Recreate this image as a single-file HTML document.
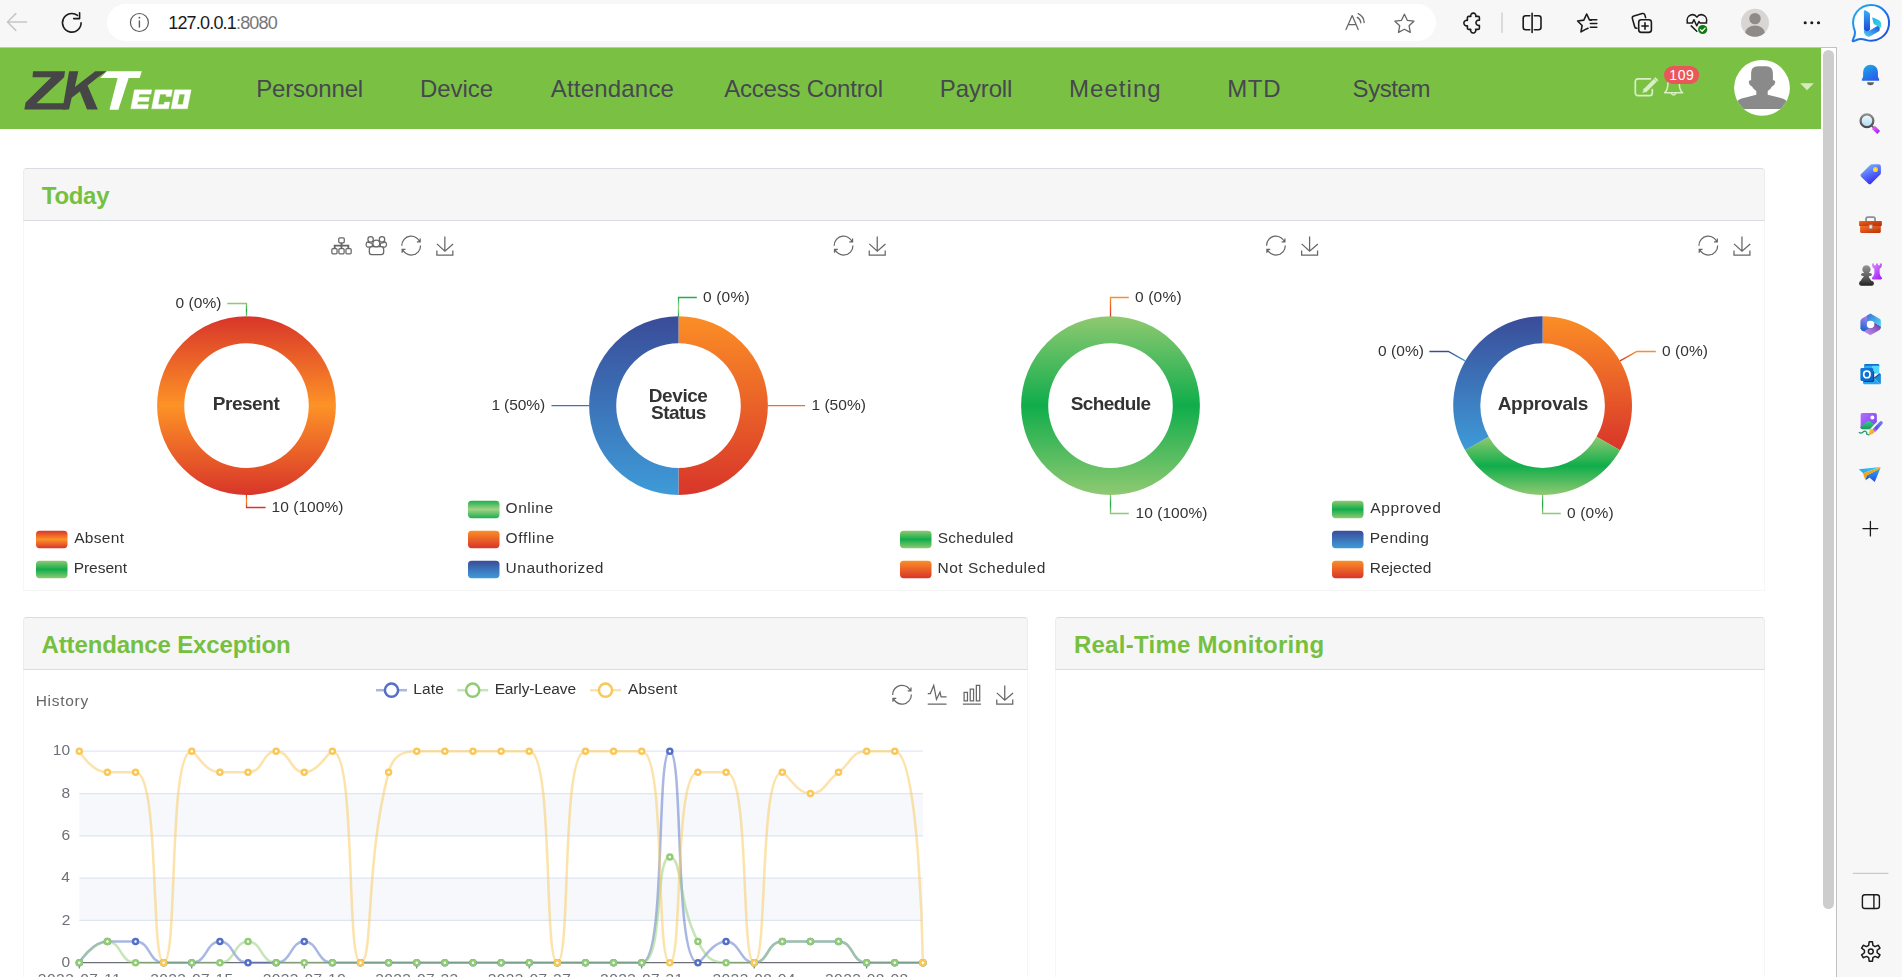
<!DOCTYPE html>
<html lang="en">
<head>
<meta charset="utf-8">
<title>ZKTeco Dashboard</title>
<style>
html,body{margin:0;padding:0;}
body{width:1902px;height:977px;overflow:hidden;background:#f7f7f7;font-family:"Liberation Sans",sans-serif;}
#root{position:relative;width:1902px;height:977px;overflow:hidden;}
.abs{position:absolute;}
.t{position:absolute;white-space:nowrap;line-height:1;}
#toolbar{position:absolute;left:0;top:0;width:1902px;height:47px;background:#f7f7f7;}
#tbline{position:absolute;left:0;top:47px;width:1837px;height:1px;background:#c2c2c2;}
#addr{position:absolute;left:107px;top:4px;width:1329px;height:37px;border-radius:18.5px;background:#fff;}
#viewport{position:absolute;left:0;top:48px;width:1836px;height:929px;background:#fff;overflow:hidden;}
#vpborder{position:absolute;left:1836px;top:47px;width:1px;height:930px;background:#c2c2c2;}
#sidebar{position:absolute;left:1837px;top:48px;width:65px;height:929px;background:#f7f7f7;}
#nav{position:absolute;left:0;top:48px;width:1821px;height:81px;background:#7ac143;}
#sbthumb{position:absolute;left:1823px;top:50px;width:11px;height:859px;border-radius:5.5px;background:#cdcdcd;}
.ph{position:absolute;background:#f6f6f6;border:1px solid #ececee;border-top-color:#d9dde3;border-bottom-color:#d9dde3;border-radius:4px 4px 0 0;box-sizing:border-box;}
.pb{position:absolute;border:1px solid #f6f6f6;border-top:none;box-sizing:border-box;}
.lg{position:absolute;width:31.5px;height:17.5px;border-radius:3.5px;}
.lcd{position:absolute;left:0;top:0;}
#txt{position:absolute;left:0;top:0;width:1902px;height:977px;will-change:transform;}
svg{position:absolute;left:0;top:0;overflow:visible;}
</style>
</head>
<body>
<div id="root">
<!-- browser toolbar -->
<div id="toolbar"></div>
<div id="tbline"></div>
<div id="addr"></div>
<svg width="1902" height="48" viewBox="0 0 1902 48" fill="none" stroke-linecap="round" stroke-linejoin="round">
 <!-- back -->
 <path d="M26.5 22H8M15.8 13.6L7.4 22l8.4 8.4" stroke="#c6c6c6" stroke-width="1.5"/>
 <!-- refresh -->
 <path d="M81.1 22.8a9.3 9.3 0 1 1-3.6-7.35" stroke="#1b1b1b" stroke-width="1.6"/>
 <path d="M79.6 12.7v5.9h-5.9" stroke="#1b1b1b" stroke-width="1.6"/>
 <!-- info -->
 <circle cx="139.4" cy="22.5" r="9" stroke="#5c5c5c" stroke-width="1.2"/>
 <path d="M139.4 21v6" stroke="#5c5c5c" stroke-width="1.4"/>
 <circle cx="139.4" cy="17.7" r="0.9" fill="#5c5c5c" stroke="none"/>
</svg>
<svg width="1902" height="48" viewBox="0 0 1902 48" fill="none" stroke-linecap="round" stroke-linejoin="round">
 <defs>
  <linearGradient id="bingA" x1="0" y1="0" x2="0" y2="1"><stop offset="0" stop-color="#3aaef6"/><stop offset="1" stop-color="#1b41d8"/></linearGradient><linearGradient id="bingO" x1="0" y1="0" x2="1" y2="1"><stop offset="0" stop-color="#1fb9f0"/><stop offset="0.55" stop-color="#1f74ea"/><stop offset="1" stop-color="#1a48d8"/></linearGradient>
  <linearGradient id="bingB" x1="0" y1="0" x2="1" y2="1"><stop offset="0" stop-color="#1fb0f2"/><stop offset="1" stop-color="#40dccf"/></linearGradient>
  <linearGradient id="bingC" x1="0" y1="1" x2="1" y2="0"><stop offset="0" stop-color="#52d4f6"/><stop offset="1" stop-color="#1f4fe0"/></linearGradient>
 </defs>
 <!-- read aloud -->
 <g stroke="#666" stroke-width="1.25">
  <path d="M1346 29.6L1352.2 15.6l6 14M1348.3 24.7h7.8"/>
  <path d="M1357.2 17.4a6.6 6.6 0 0 1 3.6 5.4M1358.2 13.6a10.6 10.6 0 0 1 6 9"/>
 </g>
 <!-- star -->
 <path d="M1404.4 14.2l2.9 6.1 6.6.9-4.8 4.6 1.2 6.6-5.9-3.2-5.9 3.2 1.2-6.6-4.8-4.6 6.6-.9z" stroke="#666" stroke-width="1.3"/>
 <!-- extensions puzzle -->
 <path d="M1468.6 16.4h2.2a2.6 2.6 0 1 1 5 0h2.4a1.2 1.2 0 0 1 1.2 1.2v2.6a2.7 2.7 0 1 0 0 5.2v2.8a1.2 1.2 0 0 1-1.2 1.2h-2.6a2.6 2.6 0 1 1-4.8 0h-2.2a1.2 1.2 0 0 1-1.2-1.2v-2.4a2.8 2.8 0 1 1 0-5.4v-2.8a1.2 1.2 0 0 1 1.2-1.2z" stroke="#1b1b1b" stroke-width="1.6"/>
 <!-- separator -->
 <path d="M1502 13v19.5" stroke="#d2d2d2" stroke-width="1.5"/>
 <!-- split screen -->
 <g stroke="#1b1b1b" stroke-width="1.6">
  <path d="M1529.8 15.8h-4.2a2.4 2.4 0 0 0-2.4 2.4v9.1a2.4 2.4 0 0 0 2.4 2.4h4.2M1534.4 15.8h4.2a2.4 2.4 0 0 1 2.4 2.4v9.1a2.4 2.4 0 0 1-2.4 2.4h-4.2M1532.1 13.4v19"/>
 </g>
 <!-- favorites -->
 <g stroke="#1b1b1b" stroke-width="1.6">
  <path d="M1591.3 20.2l-1.9-.3-2.7-5.9-2.9 6.1-6.2.9 4.5 4.5-1.1 6.4 5.4-3 1.6-.6"/>
  <path d="M1590.4 19.7h6.4M1590.4 23.5h6.4M1590.4 27.2h6.4"/>
 </g>
 <!-- collections -->
 <g stroke="#1b1b1b" stroke-width="1.6">
  <path d="M1645.6 17.6l-.7-2.5a2.2 2.2 0 0 0-2.7-1.5l-8.300 2.300a2.200 2.200 0 0 0-1.500 2.700l2.300 8.100a2.200 2.200 0 0 0 2.200 1.600"/>
  <rect x="1638.7" y="19.7" width="12.7" height="12.7" rx="2.6"/>
  <path d="M1645 22.900v6.300M1641.900 26.050h6.300"/>
 </g>
 <!-- browser essentials (heart) -->
 <g stroke="#1b1b1b" stroke-width="1.5">
  <path d="M1687.4 22.300c-.9-3.300.600-6.300 3.300-7.300 2.200-.800 4.700 0 6.200 2.100 1.500-2.100 4-2.900 6.200-2.100 2.700 1 4.200 4 3.300 7.300"/>
  <path d="M1687 23.100h5.300l1.700-3.400 2.700 6.100 2.200-4.300 1.200 1.600h6.500"/>
  <path d="M1691.200 25.900l5.600 5.400"/>
 </g>
 <circle cx="1702.700" cy="29.500" r="4.600" fill="#107c10" stroke="none"/>
 <path d="M1700.400 29.600l1.700 1.700 3-3.200" stroke="#fff" stroke-width="1.300"/>
 <!-- profile -->
 <circle cx="1755" cy="22.800" r="14" fill="#d8d6d3" stroke="none"/>
 <circle cx="1755" cy="18.600" r="5.700" fill="#8f8b88" stroke="none"/>
 <path d="M1745.200 32.800a9.800 7.200 0 0 1 19.600 0a14 14 0 0 1-19.600 0z" fill="#8f8b88" stroke="none"/>
 <!-- more -->
 <g fill="#1b1b1b" stroke="none"><circle cx="1805.200" cy="22.800" r="1.550"/><circle cx="1811.800" cy="22.800" r="1.550"/><circle cx="1818.500" cy="22.800" r="1.550"/></g>
 <!-- bing chat -->
 <path d="M1871 4.950A17.900 17.900 0 1 1 1866.400 40.100C1863.400 39.300 1860.500 38.500 1857.600 39.500S1854 41.700 1852.700 41.100C1851.900 40.300 1855.300 37 1855 32.200C1854.900 30.600 1854.300 29.200 1853.700 27.500A17.900 17.900 0 0 1 1871 4.950Z" fill="#fff" stroke="url(#bingO)" stroke-width="2"/>
 <path d="M1863.900 11.500c0-1.200.900-1.700 1.900-1.100l2.800 1.800c.900.600 1.400 1.400 1.400 2.500v15l-3.100 2.600-3-2.800z" fill="url(#bingA)" stroke="none"/>
 <path d="M1872.300 18.300c-.300-.700.100-1.100.800-.800l5.400 2.600c1.800.900 2.800 2.700 2.800 4.700 0 1.500-.500 2.800-1.500 3.800l-2.300-2.600-2.900-1.400c-.600-.300-.900-.700-1.100-1.300z" fill="url(#bingB)" stroke="none"/>
 <path d="M1863.900 29.200c0 0 2.100 2.300 3.100 2.300.700 0 1.200-.200 1.800-.500l8.600-5.100c1.900 1 2.900 2.600 2.200 4.300-.300.700-.800 1.200-1.500 1.600l-7.300 4.300c-1.300.800-3 .800-4.300 0-1.600-.900-2.600-2.700-2.600-4.500z" fill="url(#bingC)" stroke="none"/>
</svg>
<!-- edge sidebar -->
<div id="sidebar"></div>
<div id="vpborder"></div>
<svg width="1902" height="977" viewBox="0 0 1902 977" fill="none" stroke-linecap="round" stroke-linejoin="round">
 <defs>
  <linearGradient id="sbBell" x1="0.2" y1="0" x2="0.8" y2="1"><stop offset="0" stop-color="#25a8ec"/><stop offset="0.45" stop-color="#2182e6"/><stop offset="1" stop-color="#2c59f0"/></linearGradient>
  <linearGradient id="sbTag" x1="0.25" y1="0" x2="0.75" y2="1"><stop offset="0" stop-color="#7cbcfc"/><stop offset="0.5" stop-color="#5468fb"/><stop offset="1" stop-color="#3220ee"/></linearGradient>
  <linearGradient id="sbBox" x1="0" y1="0" x2="0" y2="1"><stop offset="0" stop-color="#e9571d"/><stop offset="1" stop-color="#d8430f"/></linearGradient>
  <linearGradient id="sbPawn" gradientUnits="userSpaceOnUse" x1="1866" y1="265" x2="1866" y2="286"><stop offset="0" stop-color="#979797"/><stop offset="0.65" stop-color="#555"/><stop offset="1" stop-color="#1f1f1f"/></linearGradient>
  <linearGradient id="sbRook" x1="0" y1="0" x2="0.7" y2="1"><stop offset="0" stop-color="#dc90fd"/><stop offset="0.5" stop-color="#c258fb"/><stop offset="1" stop-color="#a423f9"/></linearGradient>
  <linearGradient id="sbM1" x1="0" y1="0" x2="1" y2="1"><stop offset="0" stop-color="#3a6fd6"/><stop offset="1" stop-color="#4fdcf8"/></linearGradient>
  <linearGradient id="sbM2" x1="0.6" y1="0" x2="0.3" y2="1"><stop offset="0" stop-color="#bd80ec"/><stop offset="0.5" stop-color="#5b78e2"/><stop offset="1" stop-color="#1b5cc6"/></linearGradient>
  <linearGradient id="sbM3" x1="0" y1="1" x2="1" y2="0"><stop offset="0" stop-color="#cf9bf4"/><stop offset="0.6" stop-color="#8e5fc6"/><stop offset="1" stop-color="#5e2f92"/></linearGradient>
  <linearGradient id="sbDes" x1="0" y1="0" x2="1" y2="1"><stop offset="0" stop-color="#bb6cfb"/><stop offset="0.5" stop-color="#9359f8"/><stop offset="1" stop-color="#6c52f2"/></linearGradient>
  <linearGradient id="sbBrush" gradientUnits="userSpaceOnUse" x1="1882" y1="422" x2="1875" y2="430"><stop offset="0" stop-color="#6f7cf9"/><stop offset="1" stop-color="#4b4df2"/></linearGradient>
  <linearGradient id="plA" x1="0" y1="0" x2="1" y2="0"><stop offset="0" stop-color="#25a6f4"/><stop offset="1" stop-color="#3ccdfb"/></linearGradient><linearGradient id="plB" x1="0" y1="0" x2="0" y2="1"><stop offset="0" stop-color="#2fa6f6"/><stop offset="1" stop-color="#1d4fe6"/></linearGradient><linearGradient id="olF" x1="0" y1="0" x2="1" y2="1"><stop offset="0" stop-color="#1080e4"/><stop offset="1" stop-color="#0762c0"/></linearGradient><linearGradient id="desG" x1="0" y1="0" x2="0" y2="1"><stop offset="0" stop-color="#30d482"/><stop offset="1" stop-color="#1a8560"/></linearGradient><linearGradient id="desY" x1="0" y1="0" x2="1" y2="1"><stop offset="0" stop-color="#ffd13a"/><stop offset="1" stop-color="#e89c0c"/></linearGradient><linearGradient id="tbL" x1="0" y1="0" x2="1" y2="1"><stop offset="0" stop-color="#ee6a12"/><stop offset="0.5" stop-color="#cf4510"/><stop offset="1" stop-color="#b1300f"/></linearGradient><linearGradient id="tbB" x1="0" y1="0" x2="0.6" y2="1"><stop offset="0" stop-color="#f6762e"/><stop offset="0.6" stop-color="#dc541b"/><stop offset="1" stop-color="#c6390b"/></linearGradient><linearGradient id="sbLens" x1="0" y1="0" x2="0" y2="1"><stop offset="0.1" stop-color="#f2f7fc"/><stop offset="1" stop-color="#a6dbf8"/></linearGradient><linearGradient id="srR" x1="0" y1="0" x2="0" y2="1"><stop offset="0" stop-color="#8d8d8d"/><stop offset="1" stop-color="#4a4a4a"/></linearGradient><linearGradient id="srH" gradientUnits="userSpaceOnUse" x1="1873" y1="127" x2="1879" y2="133"><stop offset="0" stop-color="#f45cf6"/><stop offset="1" stop-color="#9a25f6"/></linearGradient>
 </defs>
 <!-- bell -->
 <path d="M1867.05 82.17 A3.41 3.01 0 0 0 1873.90 82.17 Z" fill="#56616b"/>
 <path d="M1863.12 72.08 A7.40 7.40 0 0 1 1877.93 72.08 V76.18 Q1878.09 77.65 1879.07 78.96 Q1879.63 80.83 1878.42 80.83 H1862.60 Q1861.39 80.83 1861.94 78.96 Q1862.96 77.65 1863.12 76.18 Z" fill="url(#sbBell)"/>
 <!-- search -->
 <path d="M1871.38 125.36 L1873.34 127.33" stroke="#5a5f5a" stroke-width="1.6"/>
 <path d="M1873.41 127.39 L1878.65 132.40" stroke="url(#srH)" stroke-width="4.200" stroke-linecap="butt"/>
 <circle cx="1866.96" cy="120.77" r="6.39" fill="url(#sbLens)" stroke="url(#srR)" stroke-width="2.300"/>
 <!-- tag -->
 <path d="M1872.03 164.29 H1878.58 Q1880.88 164.29 1880.88 166.68 V172.90 Q1880.88 174.05 1880.06 174.87 L1871.05 183.71 Q1869.74 185.02 1868.43 183.71 L1861.06 176.67 Q1859.75 175.36 1861.06 174.05 L1869.90 165.21 Q1870.89 164.29 1872.03 164.29 Z" fill="url(#sbTag)"/>
 <circle cx="1875.47" cy="169.46" r="1.80" fill="#e6ecfb" stroke="#fbd10c" stroke-width="1.500"/>
 <!-- toolbox -->
 <path d="M1866.07 221.10 V218.81 Q1866.07 217.11 1867.94 217.11 H1873.18 Q1875.05 217.11 1875.05 218.81 V221.10" stroke="#8b9197" stroke-width="1.800" stroke-linecap="butt"/>
 <path d="M1860.31 225.03 H1880.55 Q1880.55 225.03 1880.55 225.03 V232.07 H1860.31 Z" fill="url(#tbB)"/>
 <rect x="1860.31" y="225.03" width="20.24" height="7.93" rx="1.05" fill="url(#tbB)" />
 <rect x="1859.09" y="220.94" width="22.76" height="5.01" rx="0.72" fill="url(#tbL)" />
 <rect x="1868.82" y="224.54" width="3.87" height="4.42" rx="0.72" fill="#a9c3d2" stroke="#c8501a" stroke-width=".5"/>
 <rect x="1869.90" y="225.52" width="1.70" height="2.52" rx="0.39" fill="#e9f3f8" />
 <!-- chess -->
 <path d="M1872.10 263.40 H1874.06 V265.14 H1875.96 V263.40 H1877.99 V265.14 H1879.89 V263.40 H1881.86 V265.86 Q1881.70 267.83 1879.63 268.81 V273.39 Q1880.22 276.34 1881.92 277.82 Q1882.35 279.62 1880.88 279.62 H1873.02 Q1871.54 279.62 1871.97 277.82 Q1873.74 276.34 1874.33 273.39 V268.81 Q1872.26 267.83 1872.10 265.86 Z" fill="url(#sbRook)"/>
 <g fill="url(#sbPawn)">
  <circle cx="1866.46" cy="269.40" r="4.13"/>
  <rect x="1861.16" y="272.90" width="10.61" height="3.01" rx="1.51"/>
  <path d="M1864.34 275.69 L1868.76 275.69 Q1869.41 279.62 1873.34 282.24 L1859.75 282.24 Z"/>
  <path d="M1864.34 275.69 L1859.75 282.24 Q1863.58 279.62 1864.34 275.69"/>
  <rect x="1859.09" y="280.93" width="14.81" height="4.91" rx="2.36"/>
 </g>
 <!-- m365 -->
 <clipPath id="m365c"><path d="M1870.39 313.40L1880.38 319.14L1880.88 321.10L1880.88 327.98L1879.57 329.95L1870.39 335.35L1861.39 330.27L1860.40 328.31L1860.40 321.10L1861.55 318.81Z" stroke-linejoin="round"/></clipPath>
 <g clip-path="url(#m365c)">
  <path d="M1867.18 315.04L1859.91 318.81L1859.91 330.93L1863.84 331.75L1870.39 328.14L1867.18 325.69Z" fill="url(#sbM2)"/>
  <path d="M1863.68 331.65L1870.39 335.84L1881.20 330.27L1881.20 326.74L1874.33 322.61L1874.16 326.34L1870.13 328.37Z" fill="url(#sbM3)"/>
  <path d="M1866.96 312.91L1870.39 312.91L1881.20 318.81L1881.20 326.83L1874.33 322.58L1872.03 321.10L1866.96 321.76Z" fill="url(#sbM1)"/>
 </g>
 <path d="M1870.39 313.40L1880.38 319.14L1880.88 321.10L1880.88 327.98L1879.57 329.95L1870.39 335.35L1861.39 330.27L1860.40 328.31L1860.40 321.10L1861.55 318.81Z" fill="none" stroke="url(#sbM2)" stroke-width="0" />
 <circle cx="1870.4" cy="324.4" r="3.6" fill="#fff"/>
 <!-- outlook -->
 <rect x="1864.17" y="364.06" width="15.07" height="3.77" rx="0.98" fill="#0f6fc8"/>
 <rect x="1864.17" y="365.70" width="7.86" height="8.02" rx="0.00" fill="#2aa9ef"/>
 <rect x="1872.03" y="365.70" width="7.21" height="8.02" rx="0.00" fill="#50d7fb"/>
 <path d="M1863.02 376.34L1863.02 383.22L1864.01 384.20L1880.22 384.20L1874.33 378.14L1872.03 376.34Z" fill="#20a8f1"/>
 <path d="M1874.33 377.98L1880.06 373.66L1880.88 374.05L1880.88 383.22L1880.22 384.20Z" fill="#178de0"/>
 <path d="M1873.83 377.65L1879.57 373.33L1880.38 374.05L1874.49 378.47Z" fill="#0b3f8f"/>
 <rect x="1863.19" y="371.10" width="10.97" height="10.81" rx="1.31" fill="#07427f"/>
 <rect x="1860.40" y="367.99" width="12.77" height="12.94" rx="1.38" fill="url(#olF)"/>
 <ellipse cx="1866.86" cy="374.38" rx="3.21" ry="3.34" stroke="#fff" stroke-width="1.65"/>
 <!-- designer -->
 <clipPath id="desc"><rect x="1860.40" y="412.91" width="16.54" height="16.38" rx="2.13"/></clipPath>
 <g clip-path="url(#desc)"><rect x="1860.40" y="412.91" width="16.54" height="16.38" fill="url(#sbDes)"/>
  <path d="M1859.91 427.00 L1867.61 421.27 Q1868.59 420.61 1869.74 421.36 L1877.93 426.67 L1877.93 430.93 L1859.91 430.93 Z" fill="url(#desG)"/>
  <path d="M1869.74 430.93 L1878.58 421.76" stroke="#f7f7f7" stroke-width="2.2"/></g>
 <circle cx="1872.36" cy="417.50" r="2" fill="#fff"/>
 <path d="M1875.96 428.47 L1881.04 422.90" stroke="url(#sbBrush)" stroke-width="3.500" stroke-linecap="round"/>
 <path d="M1873.67 430.93 L1875.47 429.03" stroke="#b45ae8" stroke-width="3.500" stroke-linecap="butt"/>
 <path d="M1871.54 428.47 L1875.14 431.42 Q1873.34 434.20 1868.92 435.02 Q1869.41 433.88 1868.92 432.40 Q1869.08 429.95 1871.54 428.47 Z" fill="url(#desY)"/>
 <path d="M1859.26 432.50 Q1861.06 433.88 1863.02 432.07 T1866.46 432.07 Q1867.28 432.89 1866.46 433.88 Q1867.12 434.70 1868.92 434.86" stroke="#1f9a68" stroke-width="1.250" fill="none"/>
 <!-- send (paper plane) -->
 <path d="M1858.87 469.30L1880.71 467.11L1863.12 473.13Z" fill="url(#plA)"/>
 <path d="M1866.53 475.43L1880.29 468.55L1874.72 482.07L1869.41 477.39Z" fill="url(#plB)"/>
 <path d="M1866.53 475.43L1869.48 477.39L1865.91 480.01Z" fill="#0b53c6"/>
 <path d="M1862.96 473.13L1880.71 467.17L1880.06 468.81L1866.66 475.49L1865.55 480.76Z" fill="#f6a40a"/>
 <!-- plus -->
 <path d="M1863 528.600h14.800M1870.400 521.300v14.600" stroke="#1b1b1b" stroke-width="1.300"/>
 <!-- bottom -->
 <path d="M1853.200 873.400h34.800" stroke="#c9c9c9" stroke-width="1.100"/>
 <rect x="1862.400" y="894.700" width="17" height="13.800" rx="2.600" stroke="#1b1b1b" stroke-width="1.400"/>
 <path d="M1873.900 894.700v13.800" stroke="#1b1b1b" stroke-width="1.400"/>
 <g transform="translate(1870.8 951.5)" stroke="#1b1b1b" stroke-width="1.5" stroke-linejoin="round">
  <circle r="2.4"/>
  <path d="M-2.12 -6.15L-1.62 -9.67L1.62 -9.67L2.12 -6.15L4.26 -4.91L7.56 -6.23L9.18 -3.43L6.38 -1.24L6.38 1.24L9.18 3.43L7.56 6.23L4.26 4.91L2.12 6.15L1.62 9.67L-1.62 9.67L-2.12 6.15L-4.26 4.91L-7.56 6.23L-9.18 3.43L-6.38 1.24L-6.38 -1.24L-9.18 -3.43L-7.56 -6.23L-4.26 -4.91Z"/>
 </g>
</svg>
<!-- page viewport -->
<div id="viewport"></div>
<div id="nav"></div>
<div id="sbthumb"></div>
<!-- logo -->
<svg width="220" height="130" viewBox="0 0 220 130">
 <g transform="translate(20 65) scale(0.05118)" fill="#464646"><path d="M255 120L880 120L862 238L322 745L900 745L900 870L85 870L110 732L612 240L245 240Z"/><path d="M960 120L1140 120L1072 428L1470 120L1690 120L1510 250L1320 400L1520 870L1310 870L1170 520L1010 640L958 870L830 870L850 745Z"/></g>
 <g transform="translate(95 65) scale(0.05258)" fill="#fff">
  <path d="M225 120L890 120L850 245L640 245L445 850L275 850L430 245L100 245Z"/>
  <g stroke="#fff" stroke-width="6" stroke-linejoin="round">
  <path d="M749.3 472L1079.3 472L1063.6 554L841.6 554L830.4 612L1034.4 612L1018.9 693L814.9 693L803.7 751L1020.7 751L1005 833L680 833Z"/>
  <path d="M1145.3 472L1473.3 472L1448.7 600L1348.7 600L1357.6 554L1237.6 554L1199.7 751L1313.7 751L1322.6 705L1423.6 705L1399 833L1076 833Z"/>
  <path d="M1516.3 472L1828.3 472L1759 833L1447 833ZM1606.6 554L1708.6 554L1670.7 751L1568.7 751Z" fill-rule="evenodd"/>
  </g>
 </g>
</svg>
<!-- nav right icons -->
<svg width="1902" height="140" viewBox="0 0 1902 140" fill="none" stroke-linecap="round" stroke-linejoin="round">
 <g stroke="#d9efc8" stroke-width="1.700">
  <path d="M1652.300 89.600v3.300a2.700 2.700 0 0 1-2.700 2.700h-11.600a2.700 2.700 0 0 1-2.700-2.700v-11.400a2.700 2.700 0 0 1 2.700-2.700h12.400"/>
 </g>
 <path d="M1643.10 92.50L1646.71 91.58L1644.02 88.89ZM1646.71 91.58L1656.42 81.86L1653.74 79.18L1644.02 88.89ZM1656.99 81.30L1658.12 80.17L1655.43 77.48L1654.30 78.61Z" fill="#d9efc8" stroke="#d9efc8" stroke-width=".5" stroke-linejoin="round"/>
 <!-- bell -->
 <path d="M1673.600 78.200c-3.500 0-5.800 2.800-5.800 6.400 0 4.200-1.400 6.600-3.200 8.200h18c-1.800-1.600-3.200-4-3.200-8.200 0-3.600-2.300-6.400-5.800-6.400z" stroke="#d9efc8" stroke-width="1.500"/>
 <path d="M1671.400 93.400a2.300 2.300 0 0 0 4.400 0" stroke="#d9efc8" stroke-width="1.500"/>
 <rect x="1664" y="66" width="35.200" height="18" rx="9" fill="#e9575b"/>
 <!-- avatar -->
 <circle cx="1762" cy="87.9" r="27.9" fill="#fff"/>
 <clipPath id="avc"><circle cx="1762" cy="87.9" r="27.9"/></clipPath>
 <g clip-path="url(#avc)" fill="#8a8a8a">
  <path d="M1758.200 66.200h7.800q6.900 0 6.900 6.900v7.200q2.600-.400 2.300 2.200q-.300 2.800-3.200 4q-1.500 3-4.300 4.600v3.600l15.500 4q2.800.800 3.500 3v7.400h-49.400v-7.400q.700-2.200 3.500-3l15.500-4v-3.600q-2.800-1.600-4.300-4.600q-2.900-1.200-3.200-4q-.300-2.600 2.300-2.200v-7.200q0-6.900 6.900-6.900z"/>
 </g>
 <path d="M1800.200 83.200h13.600l-6.800 7z" fill="#d5ecc1"/>
</svg>
<!-- panels -->
<div class="ph" style="left:23px;top:168px;width:1742px;height:53px;"></div>
<div class="pb" style="left:23px;top:221px;width:1742px;height:370px;"></div>
<div class="ph" style="left:23px;top:617px;width:1005px;height:53px;"></div>
<div class="pb" style="left:23px;top:670px;width:1005px;height:320px;"></div>
<div class="ph" style="left:1055px;top:617px;width:710px;height:53px;"></div>
<div class="pb" style="left:1055px;top:670px;width:710px;height:320px;"></div>
<svg width="1902" height="977" viewBox="0 0 1902 977" fill="none">
<defs><linearGradient id="g_or" x1="0" y1="0" x2="0" y2="1"><stop offset="0" stop-color="#fb8e26"/><stop offset="1" stop-color="#d8352a"/></linearGradient><linearGradient id="g_ror" x1="0" y1="0" x2="0" y2="1"><stop offset="0" stop-color="#d8352a"/><stop offset="0.5" stop-color="#fd9226"/><stop offset="1" stop-color="#d8352a"/></linearGradient><linearGradient id="g_lgl" x1="0" y1="0" x2="0" y2="1"><stop offset="0" stop-color="#8fc971"/><stop offset="0.5" stop-color="#10ad4b"/><stop offset="1" stop-color="#8fc971"/></linearGradient><linearGradient id="g_glg" x1="0" y1="0" x2="0" y2="1"><stop offset="0" stop-color="#1bb04e"/><stop offset="0.5" stop-color="#a2d285"/><stop offset="1" stop-color="#1bb04e"/></linearGradient><linearGradient id="g_bl" x1="0" y1="0" x2="0" y2="1"><stop offset="0" stop-color="#3a4c99"/><stop offset="1" stop-color="#3e9bd8"/></linearGradient></defs>
<clipPath id="vpclip"><rect x="0" y="48" width="1821" height="929"/></clipPath>
<g clip-path="url(#vpclip)">
<path d="M246.5 316.2 A89.4 89.4 0 1 1 246.5 495 A89.4 89.4 0 1 1 246.5 316.2 Z M246.5 343.3 A62.3 62.3 0 1 0 246.5 467.9 A62.3 62.3 0 1 0 246.5 343.3 Z" fill="url(#g_ror)" fill-rule="evenodd"/>
<polyline points="246.5,316.5 246.5,303.5 227.3,303.5" stroke="url(#g_lgl)" stroke-width="1.3" fill="none"/>
<polyline points="246.5,494.5 246.5,507.5 265.6,507.5" stroke="url(#g_ror)" stroke-width="1.3" fill="none"/>
<path d="M678.5 316.2 A89.4 89.4 0 0 1 678.5 495 L678.5 467.9 A62.3 62.3 0 0 0 678.5 343.3 Z" fill="url(#g_or)" fill-rule="evenodd"/>
<path d="M678.5 495 A89.4 89.4 0 0 1 678.5 316.2 L678.5 343.3 A62.3 62.3 0 0 0 678.5 467.9 Z" fill="url(#g_bl)" fill-rule="evenodd"/>
<polyline points="678.5,316.5 678.5,297.5 696.8,297.5" stroke="url(#g_glg)" stroke-width="1.3" fill="none"/>
<polyline points="767.9,405.6 805,405.6" stroke="#f0702a" stroke-width="1.3" fill="none"/>
<polyline points="589.1,405.6 551.5,405.6" stroke="#3d74b8" stroke-width="1.3" fill="none"/>
<path d="M1110.5 316.2 A89.4 89.4 0 1 1 1110.5 495 A89.4 89.4 0 1 1 1110.5 316.2 Z M1110.5 343.3 A62.3 62.3 0 1 0 1110.5 467.9 A62.3 62.3 0 1 0 1110.5 343.3 Z" fill="url(#g_lgl)" fill-rule="evenodd"/>
<polyline points="1110.5,316.5 1110.5,297.5 1128.8,297.5" stroke="url(#g_or)" stroke-width="1.3" fill="none"/>
<polyline points="1110.5,494.5 1110.5,513.5 1128.8,513.5" stroke="url(#g_lgl)" stroke-width="1.3" fill="none"/>
<path d="M1542.6 316.2 A89.4 89.4 0 0 1 1620.02 450.3 L1596.55 436.75 A62.3 62.3 0 0 0 1542.6 343.3 Z" fill="url(#g_or)" fill-rule="evenodd"/>
<path d="M1620.02 450.3 A89.4 89.4 0 0 1 1465.18 450.3 L1488.65 436.75 A62.3 62.3 0 0 0 1596.55 436.75 Z" fill="url(#g_lgl)" fill-rule="evenodd"/>
<path d="M1465.18 450.3 A89.4 89.4 0 0 1 1542.6 316.2 L1542.6 343.3 A62.3 62.3 0 0 0 1488.65 436.75 Z" fill="url(#g_bl)" fill-rule="evenodd"/>
<polyline points="1620.02,360.9 1636.82,351.5 1655.8,351.5" stroke="url(#g_or)" stroke-width="1.3" fill="none"/>
<polyline points="1465.18,360.9 1448.38,351.5 1429.4,351.5" stroke="url(#g_bl)" stroke-width="1.3" fill="none"/>
<polyline points="1542.6,494.5 1542.6,513.5 1560.8,513.5" stroke="url(#g_lgl)" stroke-width="1.3" fill="none"/>
<rect x="36" y="530.7" width="31.5" height="17.5" rx="3.6" fill="url(#g_ror)"/>
<rect x="36" y="560.7" width="31.5" height="17.5" rx="3.6" fill="url(#g_lgl)"/>
<rect x="468" y="500.7" width="31.5" height="17.5" rx="3.6" fill="url(#g_glg)"/>
<rect x="468" y="530.7" width="31.5" height="17.5" rx="3.6" fill="url(#g_or)"/>
<rect x="468" y="560.7" width="31.5" height="17.5" rx="3.6" fill="url(#g_bl)"/>
<rect x="900" y="530.7" width="31.5" height="17.5" rx="3.6" fill="url(#g_lgl)"/>
<rect x="900" y="560.7" width="31.5" height="17.5" rx="3.6" fill="url(#g_or)"/>
<rect x="1332" y="500.7" width="31.5" height="17.5" rx="3.6" fill="url(#g_lgl)"/>
<rect x="1332" y="530.7" width="31.5" height="17.5" rx="3.6" fill="url(#g_bl)"/>
<rect x="1332" y="560.7" width="31.5" height="17.5" rx="3.6" fill="url(#g_or)"/>
<path d="M3.8,33.4 M47,18.9h9.8V8.7 M56.3,20.1 C52.1,9,40.5,0.6,26.8,2.1C12.6,3.7,1.6,16.2,2.1,30.6 M13,41.1H3.1v10.2 M3.7,39.9c4.2,11.1,15.8,19.5,29.5,18 c14.2-1.6,25.2-14.1,24.7-28.5" transform="translate(401.11 235.53) scale(0.3357)" fill="none" stroke="#666" stroke-width="3.72"/>
<path d="M4.7,22.9L29.3,45.5L54.7,23.4M4.6,43.6L4.6,58L53.8,58L53.8,43.6M29.2,45.1L29.2,0" transform="translate(435.39 236.45) scale(0.3241)" fill="none" stroke="#666" stroke-width="3.86"/>
<path d="M3.8,33.4 M47,18.9h9.8V8.7 M56.3,20.1 C52.1,9,40.5,0.6,26.8,2.1C12.6,3.7,1.6,16.2,2.1,30.6 M13,41.1H3.1v10.2 M3.7,39.9c4.2,11.1,15.8,19.5,29.5,18 c14.2-1.6,25.2-14.1,24.7-28.5" transform="translate(833.48 235.53) scale(0.3357)" fill="none" stroke="#666" stroke-width="3.72"/>
<path d="M4.7,22.9L29.3,45.5L54.7,23.4M4.6,43.6L4.6,58L53.8,58L53.8,43.6M29.2,45.1L29.2,0" transform="translate(867.76 236.45) scale(0.3241)" fill="none" stroke="#666" stroke-width="3.86"/>
<path d="M3.8,33.4 M47,18.9h9.8V8.7 M56.3,20.1 C52.1,9,40.5,0.6,26.8,2.1C12.6,3.7,1.6,16.2,2.1,30.6 M13,41.1H3.1v10.2 M3.7,39.9c4.2,11.1,15.8,19.5,29.5,18 c14.2-1.6,25.2-14.1,24.7-28.5" transform="translate(1265.85 235.53) scale(0.3357)" fill="none" stroke="#666" stroke-width="3.72"/>
<path d="M4.7,22.9L29.3,45.5L54.7,23.4M4.6,43.6L4.6,58L53.8,58L53.8,43.6M29.2,45.1L29.2,0" transform="translate(1300.13 236.45) scale(0.3241)" fill="none" stroke="#666" stroke-width="3.86"/>
<path d="M3.8,33.4 M47,18.9h9.8V8.7 M56.3,20.1 C52.1,9,40.5,0.6,26.8,2.1C12.6,3.7,1.6,16.2,2.1,30.6 M13,41.1H3.1v10.2 M3.7,39.9c4.2,11.1,15.8,19.5,29.5,18 c14.2-1.6,25.2-14.1,24.7-28.5" transform="translate(1698.22 235.53) scale(0.3357)" fill="none" stroke="#666" stroke-width="3.72"/>
<path d="M4.7,22.9L29.3,45.5L54.7,23.4M4.6,43.6L4.6,58L53.8,58L53.8,43.6M29.2,45.1L29.2,0" transform="translate(1732.5 236.45) scale(0.3241)" fill="none" stroke="#666" stroke-width="3.86"/>
<path d="M3.8,33.4 M47,18.9h9.8V8.7 M56.3,20.1 C52.1,9,40.5,0.6,26.8,2.1C12.6,3.7,1.6,16.2,2.1,30.6 M13,41.1H3.1v10.2 M3.7,39.9c4.2,11.1,15.8,19.5,29.5,18 c14.2-1.6,25.2-14.1,24.7-28.5" transform="translate(891.91 684.63) scale(0.3357)" fill="none" stroke="#666" stroke-width="3.72"/>
<path d="M4.1,28.9h7.1l9.3-22l7.4,38l9.7-19.7l3,12.8h14.9M4.1,58h51.4" transform="translate(926.25 682.98) scale(0.3658)" fill="none" stroke="#666" stroke-width="3.42"/>
<path d="M6.7,22.9h10V48h-10V22.9zM24.9,13h10v35h-10V13zM43.2,2h10v46h-10V2zM3.1,58h53.7" transform="translate(961.85 684.73) scale(0.3357)" fill="none" stroke="#666" stroke-width="3.72"/>
<path d="M4.7,22.9L29.3,45.5L54.7,23.4M4.6,43.6L4.6,58L53.8,58L53.8,43.6M29.2,45.1L29.2,0" transform="translate(995.29 685.45) scale(0.3241)" fill="none" stroke="#666" stroke-width="3.86"/>
<g stroke="#666" stroke-width="1.25" fill="none" stroke-linejoin="round"><rect x="338.75" y="237.75" width="5.5" height="5.1" rx="1.05"/><rect x="331.85" y="248.5" width="5.2" height="5.4" rx="1.05"/><rect x="338.9" y="248.5" width="5.2" height="5.4" rx="1.05"/><rect x="345.95" y="248.5" width="5.2" height="5.4" rx="1.05"/><path d="M341.5 242.9v5.6M334.7 248.5v-2.9h13.6v2.9" stroke-width="1.9" stroke-linejoin="miter"/></g>
<g stroke="#666" stroke-width="1.25" fill="#fff" stroke-linejoin="round"><circle cx="370.6" cy="239.4" r="2.7"/><circle cx="382" cy="239.4" r="2.7"/><path d="M367.6 242.2l4.7 1.300v3.200l-4.200.5q-.9.100-1.300-.7l-.5-1q-.3-.7-.1-1.400l.3-1.100q.3-1 1.100-.8z"/><path d="M385 242.200l-4.700 1.300v3.200l4.200.5q.9.100 1.300-.7l.5-1q.3-.7.100-1.400l-.3-1.100q-.3-1-1.100-.8z"/><path d="M372.300 246.600h8.400q3 0 3 3v2.400q0 2.600-2.600 2.600h-9.200q-2.600 0-2.600-2.600v-2.400q0-3 3-3z"/><circle cx="376.300" cy="243.400" r="3.400"/></g>
<rect x="79.3" y="793.5" width="843.6" height="42.3" fill="#f6f8fc"/>
<rect x="79.3" y="878.1" width="843.6" height="42.3" fill="#f6f8fc"/>
<path d="M79.3 920.4H922.9" stroke="#E0E6F1" stroke-width="1.25"/>
<path d="M79.3 878.1H922.9" stroke="#E0E6F1" stroke-width="1.25"/>
<path d="M79.3 835.8H922.9" stroke="#E0E6F1" stroke-width="1.25"/>
<path d="M79.3 793.5H922.9" stroke="#E0E6F1" stroke-width="1.25"/>
<path d="M79.3 751.2H922.9" stroke="#E0E6F1" stroke-width="1.25"/>
<path d="M79.3 962.700H922.9" stroke="#6E7079" stroke-width="1.200"/>
<path d="M79.3 962.700V968.500" stroke="#6E7079" stroke-width="1.100"/>
<path d="M191.78 962.700V968.500" stroke="#6E7079" stroke-width="1.100"/>
<path d="M304.26 962.700V968.500" stroke="#6E7079" stroke-width="1.100"/>
<path d="M416.74 962.700V968.500" stroke="#6E7079" stroke-width="1.100"/>
<path d="M529.22 962.700V968.500" stroke="#6E7079" stroke-width="1.100"/>
<path d="M641.7 962.700V968.500" stroke="#6E7079" stroke-width="1.100"/>
<path d="M754.18 962.700V968.500" stroke="#6E7079" stroke-width="1.100"/>
<path d="M866.66 962.700V968.500" stroke="#6E7079" stroke-width="1.100"/>
<path d="M79.3 962.7C79.3 962.7 91.79 941.55 107.42 941.55C119.91 941.55 123.05 941.55 135.54 941.55C151.17 941.55 148.03 962.7 163.66 962.7C176.15 962.7 179.29 962.7 191.78 962.7C207.41 962.7 205.84 941.55 219.9 941.55C233.96 941.55 232.39 962.7 248.02 962.7C260.51 962.7 263.65 962.7 276.14 962.7C291.77 962.7 290.2 941.55 304.26 941.55C318.32 941.55 316.75 962.7 332.38 962.7C344.87 962.7 346.44 962.7 360.5 962.7C374.56 962.7 374.56 962.7 388.62 962.7C402.68 962.7 402.68 962.7 416.74 962.7C430.8 962.7 430.8 962.7 444.86 962.7C458.92 962.7 458.92 962.7 472.98 962.7C487.04 962.7 487.04 962.7 501.1 962.7C515.16 962.7 515.16 962.7 529.22 962.7C543.28 962.7 543.28 962.7 557.34 962.7C571.4 962.7 571.4 962.7 585.46 962.7C599.52 962.7 599.52 962.7 613.58 962.7C627.64 962.7 638.43 962.7 641.7 962.7C666.55 962.7 655.76 751.2 669.82 751.2C683.88 751.2 673.8 962.7 697.94 962.7C701.92 962.7 712 941.55 726.06 941.55C740.12 941.55 740.12 962.7 754.18 962.7C768.24 962.7 766.67 941.55 782.3 941.55C794.79 941.55 796.36 941.55 810.42 941.55C824.48 941.55 826.05 941.55 838.54 941.55C854.17 941.55 851.03 962.7 866.66 962.7C879.15 962.7 880.72 962.7 894.78 962.7C908.84 962.7 922.9 962.7 922.9 962.7" stroke="#5470c6" stroke-opacity="0.5" stroke-width="2.5" fill="none" stroke-linejoin="round"/>
<path d="M79.3 962.7C79.3 962.7 93.36 941.55 107.42 941.55C121.48 941.55 119.91 962.7 135.54 962.7C148.03 962.7 149.6 962.7 163.66 962.7C177.72 962.7 177.72 962.7 191.78 962.7C205.84 962.7 207.41 962.7 219.9 962.7C235.53 962.7 233.96 941.55 248.02 941.55C262.08 941.55 260.51 962.7 276.14 962.7C288.63 962.7 290.2 962.7 304.26 962.7C318.32 962.7 318.32 962.7 332.38 962.7C346.44 962.7 346.44 962.7 360.5 962.7C374.56 962.7 374.56 962.7 388.62 962.7C402.68 962.7 402.68 962.7 416.74 962.7C430.8 962.7 430.8 962.7 444.86 962.7C458.92 962.7 458.92 962.7 472.98 962.7C487.04 962.7 487.04 962.7 501.1 962.7C515.16 962.7 515.16 962.7 529.22 962.7C543.28 962.7 543.28 962.7 557.34 962.7C571.4 962.7 571.4 962.7 585.46 962.7C599.52 962.7 599.52 962.7 613.58 962.7C627.64 962.7 635.95 962.7 641.7 962.7C664.07 962.7 654.32 856.95 669.82 856.95C682.44 856.95 677.78 903.64 697.94 941.55C705.9 956.51 710.43 962.7 726.06 962.7C738.55 962.7 741.69 962.7 754.18 962.7C769.81 962.7 766.67 941.55 782.3 941.55C794.79 941.55 796.36 941.55 810.42 941.55C824.48 941.55 826.05 941.55 838.54 941.55C854.17 941.55 851.03 962.7 866.66 962.7C879.15 962.7 880.72 962.7 894.78 962.7C908.84 962.7 922.9 962.7 922.9 962.7" stroke="#91cc75" stroke-opacity="0.5" stroke-width="2.5" fill="none" stroke-linejoin="round"/>
<path d="M79.3 751.2C79.3 751.2 91.79 772.35 107.42 772.35C119.91 772.35 131.95 772.35 135.54 772.35C160.07 772.35 150.33 962.7 163.66 962.7C178.45 962.7 167.64 751.2 191.78 751.2C195.76 751.2 204.27 772.35 219.9 772.35C232.39 772.35 235.53 772.35 248.02 772.35C263.65 772.35 262.08 751.2 276.14 751.2C290.2 751.2 290.2 772.35 304.26 772.35C318.32 772.35 328.4 751.2 332.38 751.2C356.52 751.2 345.71 962.7 360.5 962.7C373.83 962.7 364.85 861.75 388.62 772.35C392.97 756 401.11 751.2 416.74 751.2C429.23 751.2 430.8 751.2 444.86 751.2C458.92 751.2 458.92 751.2 472.98 751.2C487.04 751.2 487.04 751.2 501.1 751.2C515.16 751.2 525.95 751.2 529.22 751.2C554.07 751.2 543.28 962.7 557.34 962.7C571.4 962.7 560.61 751.2 585.46 751.2C588.73 751.2 599.52 751.2 613.58 751.2C627.64 751.2 638.43 751.2 641.7 751.2C666.55 751.2 655.03 962.7 669.82 962.7C683.15 962.7 673.41 772.35 697.94 772.35C701.53 772.35 722.47 772.35 726.06 772.35C750.59 772.35 740.12 962.7 754.18 962.7C768.24 962.7 758.53 772.35 782.3 772.35C786.65 772.35 796.36 793.5 810.42 793.5C824.48 793.5 824.48 782.92 838.54 772.35C852.6 761.78 851.03 751.2 866.66 751.2C879.15 751.2 891.51 751.2 894.78 751.2C919.63 751.2 922.9 962.7 922.9 962.7" stroke="#fac858" stroke-opacity="0.5" stroke-width="2.5" fill="none" stroke-linejoin="round"/>
<g fill="#fff" stroke="#5470c6" stroke-width="2.5"><circle cx="79.3" cy="962.7" r="2.5"/><circle cx="107.42" cy="941.55" r="2.5"/><circle cx="135.54" cy="941.55" r="2.5"/><circle cx="163.66" cy="962.7" r="2.5"/><circle cx="191.78" cy="962.7" r="2.5"/><circle cx="219.9" cy="941.55" r="2.5"/><circle cx="248.02" cy="962.7" r="2.5"/><circle cx="276.14" cy="962.7" r="2.5"/><circle cx="304.26" cy="941.55" r="2.5"/><circle cx="332.38" cy="962.7" r="2.5"/><circle cx="360.5" cy="962.7" r="2.5"/><circle cx="388.62" cy="962.7" r="2.5"/><circle cx="416.74" cy="962.7" r="2.5"/><circle cx="444.86" cy="962.7" r="2.5"/><circle cx="472.98" cy="962.7" r="2.5"/><circle cx="501.1" cy="962.7" r="2.5"/><circle cx="529.22" cy="962.7" r="2.5"/><circle cx="557.34" cy="962.7" r="2.5"/><circle cx="585.46" cy="962.7" r="2.5"/><circle cx="613.58" cy="962.7" r="2.5"/><circle cx="641.7" cy="962.7" r="2.5"/><circle cx="669.82" cy="751.2" r="2.5"/><circle cx="697.94" cy="962.7" r="2.5"/><circle cx="726.06" cy="941.55" r="2.5"/><circle cx="754.18" cy="962.7" r="2.5"/><circle cx="782.3" cy="941.55" r="2.5"/><circle cx="810.42" cy="941.55" r="2.5"/><circle cx="838.54" cy="941.55" r="2.5"/><circle cx="866.66" cy="962.7" r="2.5"/><circle cx="894.78" cy="962.7" r="2.5"/><circle cx="922.9" cy="962.7" r="2.5"/></g>
<g fill="#fff" stroke="#91cc75" stroke-width="2.5"><circle cx="79.3" cy="962.7" r="2.5"/><circle cx="107.42" cy="941.55" r="2.5"/><circle cx="135.54" cy="962.7" r="2.5"/><circle cx="163.66" cy="962.7" r="2.5"/><circle cx="191.78" cy="962.7" r="2.5"/><circle cx="219.9" cy="962.7" r="2.5"/><circle cx="248.02" cy="941.55" r="2.5"/><circle cx="276.14" cy="962.7" r="2.5"/><circle cx="304.26" cy="962.7" r="2.5"/><circle cx="332.38" cy="962.7" r="2.5"/><circle cx="360.5" cy="962.7" r="2.5"/><circle cx="388.62" cy="962.7" r="2.5"/><circle cx="416.74" cy="962.7" r="2.5"/><circle cx="444.86" cy="962.7" r="2.5"/><circle cx="472.98" cy="962.7" r="2.5"/><circle cx="501.1" cy="962.7" r="2.5"/><circle cx="529.22" cy="962.7" r="2.5"/><circle cx="557.34" cy="962.7" r="2.5"/><circle cx="585.46" cy="962.7" r="2.5"/><circle cx="613.58" cy="962.7" r="2.5"/><circle cx="641.7" cy="962.7" r="2.5"/><circle cx="669.82" cy="856.95" r="2.5"/><circle cx="697.94" cy="941.55" r="2.5"/><circle cx="726.06" cy="962.7" r="2.5"/><circle cx="754.18" cy="962.7" r="2.5"/><circle cx="782.3" cy="941.55" r="2.5"/><circle cx="810.42" cy="941.55" r="2.5"/><circle cx="838.54" cy="941.55" r="2.5"/><circle cx="866.66" cy="962.7" r="2.5"/><circle cx="894.78" cy="962.7" r="2.5"/><circle cx="922.9" cy="962.7" r="2.5"/></g>
<g fill="#fff" stroke="#fac858" stroke-width="2.5"><circle cx="79.3" cy="751.2" r="2.5"/><circle cx="107.42" cy="772.35" r="2.5"/><circle cx="135.54" cy="772.35" r="2.5"/><circle cx="163.66" cy="962.7" r="2.5"/><circle cx="191.78" cy="751.2" r="2.5"/><circle cx="219.9" cy="772.35" r="2.5"/><circle cx="248.02" cy="772.35" r="2.5"/><circle cx="276.14" cy="751.2" r="2.5"/><circle cx="304.26" cy="772.35" r="2.5"/><circle cx="332.38" cy="751.2" r="2.5"/><circle cx="360.5" cy="962.7" r="2.5"/><circle cx="388.62" cy="772.35" r="2.5"/><circle cx="416.74" cy="751.2" r="2.5"/><circle cx="444.86" cy="751.2" r="2.5"/><circle cx="472.98" cy="751.2" r="2.5"/><circle cx="501.1" cy="751.2" r="2.5"/><circle cx="529.22" cy="751.2" r="2.5"/><circle cx="557.34" cy="962.7" r="2.5"/><circle cx="585.46" cy="751.2" r="2.5"/><circle cx="613.58" cy="751.2" r="2.5"/><circle cx="641.7" cy="751.2" r="2.5"/><circle cx="669.82" cy="962.7" r="2.5"/><circle cx="697.94" cy="772.35" r="2.5"/><circle cx="726.06" cy="772.35" r="2.5"/><circle cx="754.18" cy="962.7" r="2.5"/><circle cx="782.3" cy="772.35" r="2.5"/><circle cx="810.42" cy="793.5" r="2.5"/><circle cx="838.54" cy="772.35" r="2.5"/><circle cx="866.66" cy="751.2" r="2.5"/><circle cx="894.78" cy="751.2" r="2.5"/><circle cx="922.9" cy="962.7" r="2.5"/></g>
<path d="M376 690.200H407" stroke="#5470c6" stroke-opacity="0.5" stroke-width="2.5"/>
<circle cx="391.5" cy="690.200" r="6.600" fill="#fff" stroke="#5470c6" stroke-width="2.500"/>
<path d="M457.2 690.200H488.2" stroke="#91cc75" stroke-opacity="0.5" stroke-width="2.5"/>
<circle cx="472.7" cy="690.200" r="6.600" fill="#fff" stroke="#91cc75" stroke-width="2.500"/>
<path d="M590 690.200H621" stroke="#fac858" stroke-opacity="0.5" stroke-width="2.5"/>
<circle cx="605.5" cy="690.200" r="6.600" fill="#fff" stroke="#fac858" stroke-width="2.500"/>
</g></svg>
<!-- page text -->
<div class="t" style="left:168.23px;top:14px;font-size:18px;color:#1a1a1a;letter-spacing:-0.812px;">127.0.0.1<span style="color:#767676">:8080</span></div>
<div class="t" style="left:256.13px;top:77px;font-size:24px;color:#46484f;letter-spacing:-0.125px;">Personnel</div>
<div class="t" style="left:419.93px;top:77px;font-size:24px;color:#46484f;letter-spacing:-0.045px;">Device</div>
<div class="t" style="left:550.75px;top:77px;font-size:24px;color:#46484f;letter-spacing:0.197px;">Attendance</div>
<div class="t" style="left:724.15px;top:77px;font-size:24px;color:#46484f;letter-spacing:-0.195px;">Access Control</div>
<div class="t" style="left:939.83px;top:77px;font-size:24px;color:#46484f;letter-spacing:-0.131px;">Payroll</div>
<div class="t" style="left:1069.03px;top:77px;font-size:24px;color:#46484f;letter-spacing:1.054px;">Meeting</div>
<div class="t" style="left:1227.13px;top:77px;font-size:24px;color:#46484f;letter-spacing:0.716px;">MTD</div>
<div class="t" style="left:1352.61px;top:77px;font-size:24px;color:#46484f;letter-spacing:-0.429px;">System</div>
<div class="t" style="left:1669.33px;top:68px;font-size:14px;color:#fff;letter-spacing:0.535px;">109</div>
<div class="t" style="left:41.83px;top:184px;font-size:24px;color:#76c03f;font-weight:700;letter-spacing:-0.302px;">Today</div>
<div class="t" style="left:41.60px;top:633px;font-size:24px;color:#76c03f;font-weight:700;letter-spacing:-0.156px;">Attendance Exception</div>
<div class="t" style="left:1073.89px;top:633px;font-size:24px;color:#76c03f;font-weight:700;letter-spacing:0.279px;">Real-Time Monitoring</div>
<!-- chart text -->
<div id="txt">
<div class="t" style="left:175.49px;top:295px;font-size:15.5px;color:#333;letter-spacing:0.062px;">0 (0%)</div>
<div class="t" style="left:271.52px;top:499px;font-size:15.5px;color:#333;letter-spacing:0.053px;">10 (100%)</div>
<div class="t" style="left:702.99px;top:289px;font-size:15.5px;color:#333;letter-spacing:0.182px;">0 (0%)</div>
<div class="t" style="left:491.42px;top:397px;font-size:15.5px;color:#333;letter-spacing:-0.107px;">1 (50%)</div>
<div class="t" style="left:811.42px;top:397px;font-size:15.5px;color:#333;letter-spacing:0.043px;">1 (50%)</div>
<div class="t" style="left:1134.99px;top:289px;font-size:15.5px;color:#333;letter-spacing:0.182px;">0 (0%)</div>
<div class="t" style="left:1135.52px;top:505px;font-size:15.5px;color:#333;letter-spacing:0.053px;">10 (100%)</div>
<div class="t" style="left:1661.99px;top:343px;font-size:15.5px;color:#333;letter-spacing:0.062px;">0 (0%)</div>
<div class="t" style="left:1377.99px;top:343px;font-size:15.5px;color:#333;letter-spacing:0.062px;">0 (0%)</div>
<div class="t" style="left:1566.99px;top:505px;font-size:15.5px;color:#333;letter-spacing:0.182px;">0 (0%)</div>
<div class="t" style="left:212.73px;top:394px;font-size:19px;color:#333;font-weight:700;letter-spacing:-0.450px;">Present</div>
<div class="t" style="left:648.83px;top:386px;font-size:19px;color:#333;font-weight:700;letter-spacing:-0.432px;">Device</div>
<div class="t" style="left:651.05px;top:403px;font-size:19px;color:#333;font-weight:700;letter-spacing:-0.570px;">Status</div>
<div class="t" style="left:1070.75px;top:394px;font-size:19px;color:#333;font-weight:700;letter-spacing:-0.598px;">Schedule</div>
<div class="t" style="left:1497.63px;top:394px;font-size:19px;color:#333;font-weight:700;letter-spacing:-0.271px;">Approvals</div>
<div class="t" style="left:74.17px;top:530px;font-size:15.5px;color:#333;letter-spacing:0.336px;">Absent</div>
<div class="t" style="left:73.63px;top:560px;font-size:15.5px;color:#333;letter-spacing:-0.006px;">Present</div>
<div class="t" style="left:505.57px;top:500px;font-size:15.5px;color:#333;letter-spacing:0.542px;">Online</div>
<div class="t" style="left:505.57px;top:530px;font-size:15.5px;color:#333;letter-spacing:0.682px;">Offline</div>
<div class="t" style="left:505.60px;top:560px;font-size:15.5px;color:#333;letter-spacing:0.517px;">Unauthorized</div>
<div class="t" style="left:937.70px;top:530px;font-size:15.5px;color:#333;letter-spacing:0.292px;">Scheduled</div>
<div class="t" style="left:937.53px;top:560px;font-size:15.5px;color:#333;letter-spacing:0.507px;">Not Scheduled</div>
<div class="t" style="left:1370.17px;top:500px;font-size:15.5px;color:#333;letter-spacing:0.639px;">Approved</div>
<div class="t" style="left:1369.63px;top:530px;font-size:15.5px;color:#333;letter-spacing:0.397px;">Pending</div>
<div class="t" style="left:1369.63px;top:560px;font-size:15.5px;color:#333;letter-spacing:0.069px;">Rejected</div>
<div class="t" style="left:35.63px;top:693px;font-size:15.5px;color:#666;letter-spacing:0.728px;">History</div>
<div class="t" style="left:413.23px;top:681px;font-size:15.5px;color:#333;letter-spacing:0.129px;">Late</div>
<div class="t" style="left:494.63px;top:681px;font-size:15.5px;color:#333;letter-spacing:-0.126px;">Early-Leave</div>
<div class="t" style="left:628.07px;top:681px;font-size:15.5px;color:#333;letter-spacing:0.216px;">Absent</div>
<div class="t" style="left:61.48px;top:954px;font-size:15.5px;color:#6E7079;">0</div>
<div class="t" style="left:61.65px;top:912px;font-size:15.5px;color:#6E7079;">2</div>
<div class="t" style="left:61.33px;top:869px;font-size:15.5px;color:#6E7079;">4</div>
<div class="t" style="left:61.56px;top:827px;font-size:15.5px;color:#6E7079;">6</div>
<div class="t" style="left:61.55px;top:785px;font-size:15.5px;color:#6E7079;">8</div>
<div class="t" style="left:52.86px;top:742px;font-size:15.5px;color:#6E7079;">10</div>
<div class="t" style="left:37.72px;top:971px;font-size:15.5px;color:#6E7079;letter-spacing:0.555px;">2023-07-11</div>
<div class="t" style="left:150.20px;top:971px;font-size:15.5px;color:#6E7079;letter-spacing:0.415px;">2023-07-15</div>
<div class="t" style="left:262.68px;top:971px;font-size:15.5px;color:#6E7079;letter-spacing:0.424px;">2023-07-19</div>
<div class="t" style="left:375.16px;top:971px;font-size:15.5px;color:#6E7079;letter-spacing:0.418px;">2023-07-23</div>
<div class="t" style="left:487.64px;top:971px;font-size:15.5px;color:#6E7079;letter-spacing:0.429px;">2023-07-27</div>
<div class="t" style="left:600.12px;top:971px;font-size:15.5px;color:#6E7079;letter-spacing:0.427px;">2023-07-31</div>
<div class="t" style="left:712.60px;top:971px;font-size:15.5px;color:#6E7079;letter-spacing:0.393px;">2023-08-04</div>
<div class="t" style="left:825.08px;top:971px;font-size:15.5px;color:#6E7079;letter-spacing:0.417px;">2023-08-08</div>
</div>
</div>
</body>
</html>
